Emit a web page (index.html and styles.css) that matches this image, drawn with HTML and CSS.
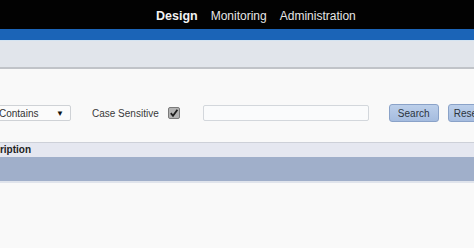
FILE: index.html
```html
<!DOCTYPE html>
<html lang="en">
<head>
    <meta charset="UTF-8">
    <title>Design</title>
    <link rel="stylesheet" href="styles.css">
</head>
<body>
    <div class="topnav">
        <a class="nav-link active">Design</a>
        <a class="nav-link">Monitoring</a>
        <a class="nav-link">Administration</a>
    </div>
    <div class="blueband"></div>
    <div class="subbar"></div>

    <div class="content">
        <div class="filter-row">
            <div class="select-box">
                <span>Contains</span>
                <span class="arrow">&#9660;</span>
            </div>
            <label class="case-label">Case Sensitive</label>
            <span class="checkbox">
                <svg width="12" height="12" viewBox="0 0 12 12">
                    <rect x="0.5" y="0.5" width="11" height="11" rx="1.5" fill="#b3b3b3" stroke="#7a7a7a"/>
                    <path d="M2.8 6.2 L5 8.8 L9.4 2.8" fill="none" stroke="#1e1e1e" stroke-width="1.8"/>
                </svg>
            </span>
            <input type="text" class="search-input">
            <button class="btn">Search</button>
            <button class="btn btn-reset">Reset</button>
        </div>

        <div class="grid">
            <div class="grid-header">Description</div>
            <div class="grid-row"></div>
        </div>
    </div>
</body>
</html>
```

FILE: styles.css
```css
body {
    margin: 0;
    padding: 0;
    background-color: #f9f9f9;
    font-family: 'Liberation Sans', Arial, sans-serif;
    overflow: hidden;
}

.topnav {
    background-color: #020202;
    height: 29px;
    display: flex;
    align-items: center;
    gap: 13px;
    padding-left: 156px;
    padding-top: 3px;
    box-sizing: border-box;
}

.nav-link {
    color: #e6e6e6;
    font-size: 12px;
}

.nav-link.active {
    color: #f2f2f2;
    font-weight: bold;
    font-size: 12.5px;
}

.blueband {
    height: 11px;
    background-color: #1b64b7;
    border-bottom: 1px solid #d3e3f1;
}

.subbar {
    height: 26px;
    background-color: #e1e5eb;
    border-bottom: 2px solid #c0c3c8;
}

.content {
    margin-left: -28px;
    width: 560px;
}

.filter-row {
    display: flex;
    align-items: center;
    margin-top: 35px;
    height: 18px;
    font-size: 10px;
    color: #333;
}

.filter-row > * {
    flex-shrink: 0;
    white-space: nowrap;
}

.select-box {
    width: 77px;
    height: 16px;
    box-sizing: border-box;
    border: 1px solid #cfd2d6;
    border-radius: 2px;
    background-color: #fbfbfb;
    display: flex;
    align-items: center;
    justify-content: space-between;
    padding: 0 6px 0 4px;
    margin-left: 22px;
}

.arrow {
    font-size: 8px;
    color: #111;
}

.case-label {
    margin-left: 21px;
    color: #3a3a3a;
}

.checkbox {
    display: flex;
    margin-left: 9px;
}

.search-input {
    width: 166px;
    height: 16px;
    box-sizing: border-box;
    border: 1px solid #d3d7dc;
    border-radius: 2px;
    background-color: #fafbfc;
    margin: 0 0 0 23px;
    padding: 0;
}

.btn {
    width: 50px;
    height: 18px;
    box-sizing: border-box;
    border: 1px solid #8aa2c8;
    border-radius: 3px;
    background: linear-gradient(#bccfea, #a5bcdf);
    font-family: 'Liberation Sans', Arial, sans-serif;
    font-size: 10px;
    color: #2b3440;
    padding: 0;
    margin-left: 20px;
}

.btn-reset {
    width: auto;
    padding: 0 5px;
    margin-left: 9px;
}

.grid {
    margin-top: 20px;
}

.grid-header {
    height: 15px;
    box-sizing: border-box;
    border-top: 1px solid #cdd0d8;
    background-color: #e5e7f0;
    font-size: 10px;
    font-weight: bold;
    color: #222;
    padding: 1px 0 0 4px;
}

.grid-row {
    height: 24px;
    background-color: #a0afca;
    border-bottom: 2px solid #e0e4ec;
}
```
